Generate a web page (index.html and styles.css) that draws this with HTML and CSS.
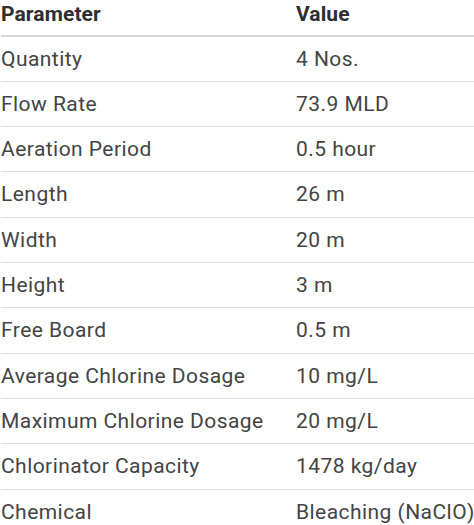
FILE: index.html
```html
<!DOCTYPE html>
<html>
<head>
<meta charset="utf-8">
<link rel="stylesheet" href="styles.css">
</head>
<body>
<table class="spec">
  <thead>
    <tr class="head"><th class="c1">Parameter</th><th class="c2">Value</th></tr>
  </thead>
  <tbody>
    <tr><td class="c1">Quantity</td><td class="c2">4 Nos.</td></tr>
    <tr><td class="c1">Flow Rate</td><td class="c2">73.9 MLD</td></tr>
    <tr><td class="c1">Aeration Period</td><td class="c2">0.5 hour</td></tr>
    <tr><td class="c1">Length</td><td class="c2">26 m</td></tr>
    <tr><td class="c1">Width</td><td class="c2">20 m</td></tr>
    <tr><td class="c1">Height</td><td class="c2">3 m</td></tr>
    <tr><td class="c1">Free Board</td><td class="c2">0.5 m</td></tr>
    <tr><td class="c1">Average Chlorine Dosage</td><td class="c2">10 mg/L</td></tr>
    <tr><td class="c1">Maximum Chlorine Dosage</td><td class="c2">20 mg/L</td></tr>
    <tr><td class="c1">Chlorinator Capacity</td><td class="c2">1478 kg/day</td></tr>
    <tr><td class="c1">Chemical</td><td class="c2">Bleaching (NaClO)</td></tr>
  </tbody>
</table>
</body>
</html>
```
FILE: styles.css
```css
html, body {
  margin: 0;
  padding: 0;
  background: #ffffff;
  overflow: hidden;
}
body {
  width: 474px;
  height: 525px;
  font-family: Roboto, "Liberation Sans", sans-serif;
  color: #444444;
}
.spec {
  border-collapse: collapse;
  width: 520px;
  table-layout: fixed;
  margin-left: 1px;
}
.spec .c1 { width: 295px; }
.spec th, .spec td {
  text-align: left;
  padding: 0;
  vertical-align: top;
  font-size: 21px;
  line-height: 24px;
  white-space: nowrap;
}
.spec th {
  font-weight: 700;
  height: 36px;
  padding-top: 2px;
  box-sizing: border-box;
  border-bottom: 2px solid #d8d8d8;
  color: #2e2e2e;
  letter-spacing: 0.1px;
}
.spec td {
  font-weight: 400;
  height: 45.33px;
  padding-top: 10px;
  box-sizing: border-box;
  border-bottom: 1px solid #e0e0e0;
  letter-spacing: 0.45px;
}
```
